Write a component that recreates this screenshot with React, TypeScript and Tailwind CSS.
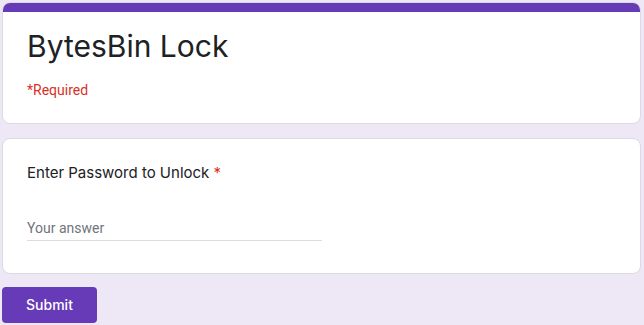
export default function App() {
  return (
    <div className="h-[325px] w-[644px] overflow-hidden bg-[#ede7f6] px-[2px] pt-[2px]">
      <div className="h-[122px] w-[639px] overflow-hidden rounded-lg border border-[#dadce0] bg-white">
        <div className="-mx-px -mt-px h-[10px] bg-[#673ab7]" />
        <div className="px-6 pt-[13px]">
          <h1 className="font-['Inter',sans-serif] text-[30px] leading-[42px] font-normal text-[#202124]">
            BytesBin Lock
          </h1>
          <p className="mt-[13px] font-['Roboto',sans-serif] text-sm text-[#d93025]">*Required</p>
        </div>
      </div>

      <div className="mt-[14px] h-[136px] w-[639px] rounded-lg border border-[#dadce0] bg-white px-6 pt-[22px]">
        <div className="font-['Inter',sans-serif] text-[15px] leading-6 text-[#202124]">
          Enter Password to Unlock <span className="text-[#d93025]">*</span>
        </div>
        <div className="mt-[33px] w-[295px] border-b border-[#dadce0] pb-[2px] font-['Roboto',sans-serif] text-sm leading-5 text-[#70757a]">
          Your answer
        </div>
      </div>

      <button className="mt-[13px] h-9 w-[95px] rounded bg-[#673ab7] font-['Inter',sans-serif] text-sm font-medium text-white">
        Submit
      </button>
    </div>
  );
}
